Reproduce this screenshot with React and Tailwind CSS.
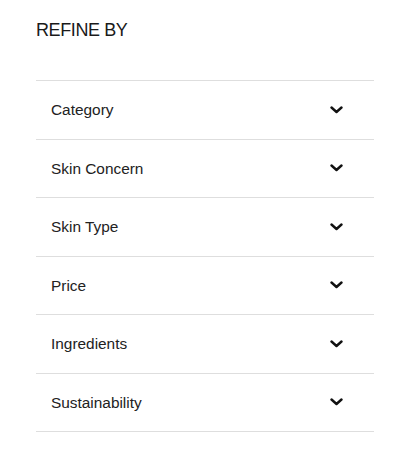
const filters = ['Category', 'Skin Concern', 'Skin Type', 'Price', 'Ingredients', 'Sustainability']

function Chevron() {
  return (
    <svg width="13" height="8" viewBox="0 0 13 8" fill="none">
      <path d="M1.5 1.5 L6.5 6 L11.5 1.5" stroke="#111" strokeWidth="2.4" strokeLinecap="round" strokeLinejoin="round" />
    </svg>
  )
}

export default function App() {
  return (
    <div className="w-[407px] h-[456px] bg-white font-['Liberation_Sans',Arial,sans-serif] text-[#1a1a1a]">
      <div className="pl-[36px] pr-[33px] pt-[19px]">
        <h2 className="text-[18px] leading-[22px] tracking-[-0.4px]">REFINE BY</h2>
        <div className="mt-[39px] border-b border-[#dedede]">
          {filters.map(name => (
            <div
              key={name}
              className="h-[58.5px] border-t border-[#dedede] flex items-center justify-between pl-[15px] pr-[31px]"
            >
              <span className="text-[15.4px] text-[#222]">{name}</span>
              <Chevron />
            </div>
          ))}
        </div>
      </div>
    </div>
  )
}
